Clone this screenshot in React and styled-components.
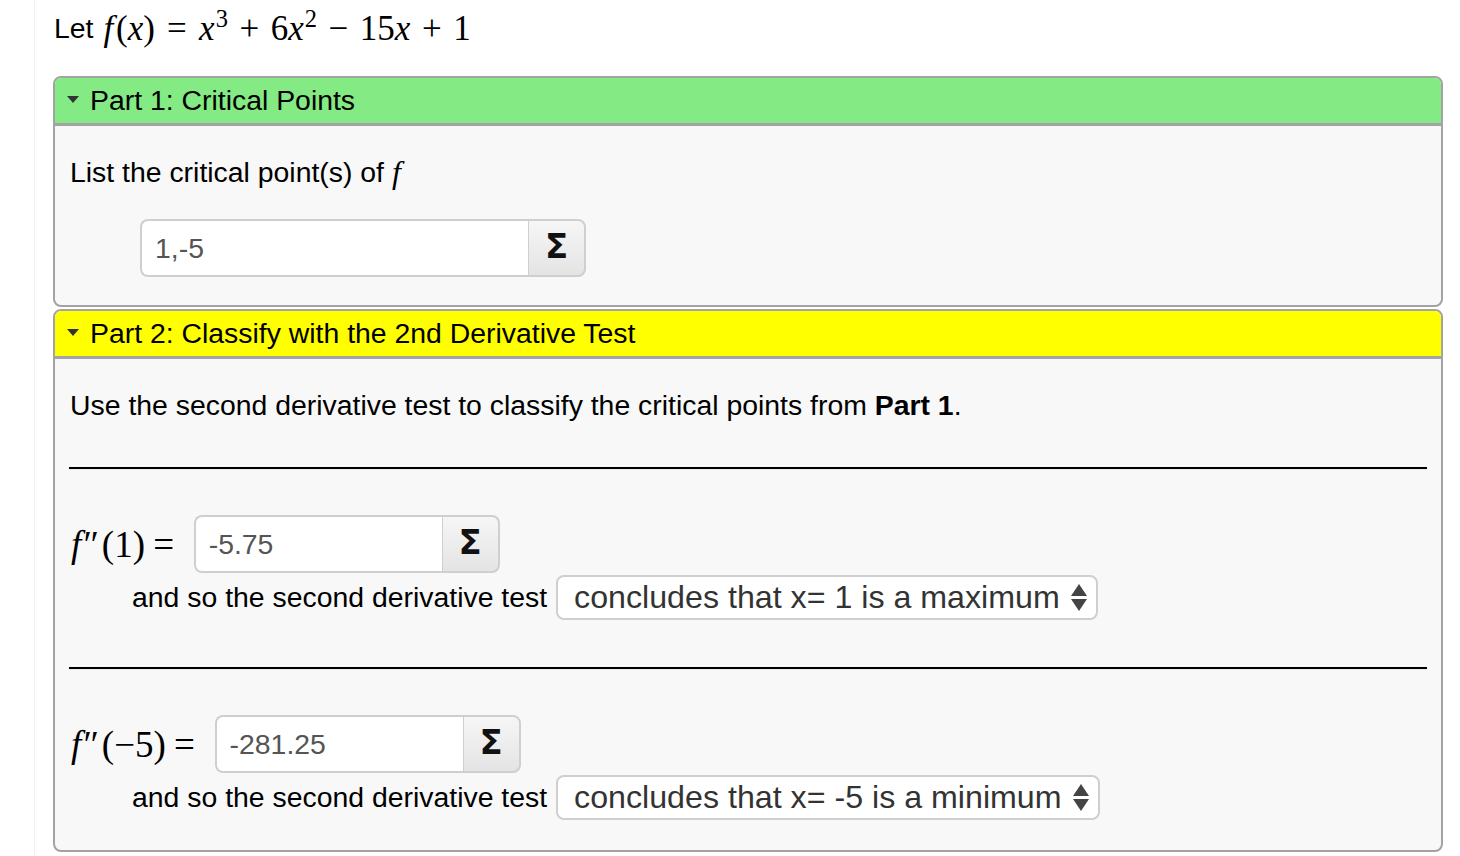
import React from "react";
import styled, { createGlobalStyle } from "styled-components";

const Global = createGlobalStyle`
  html, body { margin: 0; padding: 0; background: #fff; }
  body { font-family: "Liberation Sans", Arial, sans-serif; color: #000; }
`;

const Page = styled.div`
  margin-left: 34px;
  border-left: 1px solid #f1f1f1;
  padding: 8px 17px 0 18px;
  min-height: 848px;
`;

const Intro = styled.div`
  font-size: 28.4px;
  height: 40px;
  margin-left: 1px;
  display: flex;
  align-items: center;
  gap: 10px;
  white-space: nowrap;
`;

const Math = styled.span`
  font-family: "Liberation Serif", "Times New Roman", serif;
  font-size: ${(p) => p.size}px;
  white-space: nowrap;
  line-height: 1;
`;

const I = styled.i`
  font-style: italic;
  margin-right: ${(p) => p.mr || 0}em;
`;

const Op = styled.span`
  margin: 0 ${(p) => p.sp}em 0 ${(p) => p.spl ?? p.sp}em;
`;

const Sup = styled.sup`
  font-size: 0.7em;
  vertical-align: 0.5em;
  line-height: 0;
  margin-left: 0.04em;
`;

const Panel = styled.section`
  border: 2px solid #a3a3a3;
  border-radius: 8px;
  overflow: hidden;
  margin-top: ${(p) => p.gap}px;
  background: #f8f8f8;
`;

const Header = styled.div`
  background: ${(p) => p.bg};
  height: ${(p) => p.h}px;
  border-bottom: 3px solid #a3a3a3;
  display: flex;
  align-items: center;
  padding-left: 12px;
  gap: 11px;
  font-size: 28.4px;
`;

const Caret = styled.span`
  width: 0;
  height: 0;
  border-left: 6px solid transparent;
  border-right: 6px solid transparent;
  border-top: 7px solid #333;
  margin-top: -3px;
`;

const Body = styled.div`
  padding: 26px 15px ${(p) => p.pb}px 15px;
`;

const Text = styled.div`
  font-size: 28.4px;
  line-height: 40px;
  display: flex;
  align-items: center;
  gap: 8px;
  white-space: nowrap;
`;

const MathInline = styled.span`
  font-family: "Liberation Serif", "Times New Roman", serif;
  font-size: 32px;
  font-style: italic;
`;

const InputGroup = styled.div`
  display: flex;
  height: 58px;
  margin-left: ${(p) => p.indent || 0}px;
  margin-top: ${(p) => p.mt || 0}px;
`;

const Field = styled.div`
  width: ${(p) => p.w}px;
  box-sizing: border-box;
  background: #fff;
  border: 2px solid #cfcfcf;
  border-right: none;
  border-radius: 8px 0 0 8px;
  display: flex;
  align-items: center;
  padding-left: 13px;
  font-size: 28.4px;
  color: #555;
`;

const SigmaBtn = styled.div`
  width: 58px;
  box-sizing: border-box;
  border: 2px solid #cfcfcf;
  border-left: 1px solid #cfcfcf;
  border-radius: 0 8px 8px 0;
  background: linear-gradient(#f6f6f6, #e4e4e4);
  display: flex;
  align-items: center;
  justify-content: center;
  font-family: "DejaVu Sans", sans-serif;
  font-weight: bold;
  font-size: 34px;
  color: #111;
  padding-bottom: 5px;
`;

const Rule = styled.div`
  margin: ${(p) => p.mt}px -1px 0 -1px;
  border-top: 2px solid #000;
  border-bottom: 1px solid #eaeaea;
`;

const Row = styled.div`
  display: flex;
  align-items: center;
  gap: 16px;
  margin-top: 45px;
  margin-left: 1px;
  height: 58px;
`;

const TestRow = styled.div`
  display: flex;
  align-items: center;
  gap: 9px;
  margin-left: 62px;
  margin-top: 2px;
  font-size: 28.4px;
  white-space: nowrap;
`;

const Select = styled.div`
  height: 45px;
  box-sizing: border-box;
  border: 2px solid #cfcfcf;
  border-radius: 8px;
  background: #fff;
  display: flex;
  align-items: center;
  padding: 0 9px 0 16px;
  gap: 11px;
  font-size: 32.2px;
  color: #333;
  white-space: nowrap;
`;

const Arrows = styled.span`
  display: flex;
  flex-direction: column;
  gap: 3px;
  &::before, &::after {
    content: "";
    width: 0;
    height: 0;
    border-left: 8px solid transparent;
    border-right: 8px solid transparent;
  }
  &::before { border-bottom: 12px solid #444; }
  &::after { border-top: 12px solid #444; }
`;

const Deriv = ({ arg }) => (
  <Math size={37}>
    <I mr={0.06}>f</I>″<Op sp={0.04} />({arg})<Op spl={0.22} sp={0.1}>=</Op>
  </Math>
);

const Classify = ({ arg, value, conclusion, w }) => (
  <>
    <Row>
      <Deriv arg={arg} />
      <InputGroup>
        <Field w={w}>{value}</Field>
        <SigmaBtn>Σ</SigmaBtn>
      </InputGroup>
    </Row>
    <TestRow>
      <span>and so the second derivative test</span>
      <Select>
        {conclusion}
        <Arrows />
      </Select>
    </TestRow>
  </>
);

export default function App() {
  return (
    <>
      <Global />
      <Page>
        <Intro>
          <span>Let</span>
          <Math size={35}>
            <I mr={0.08}>f</I>(<I>x</I>)<Op sp={0.35}>=</Op>
            <I>x</I>
            <Sup>3</Sup>
            <Op sp={0.33}>+</Op>6<I>x</I>
            <Sup>2</Sup>
            <Op sp={0.33}>−</Op>15<I>x</I>
            <Op sp={0.33}>+</Op>1
          </Math>
        </Intro>
        <Panel gap={28}>
          <Header bg="#84ea84" h={45}>
            <Caret />
            Part 1: Critical Points
          </Header>
          <Body pb={28}>
            <Text>
              List the critical point(s) of <MathInline>f</MathInline>
            </Text>
            <InputGroup indent={70} mt={27}>
              <Field w={388}>1,-5</Field>
              <SigmaBtn>Σ</SigmaBtn>
            </InputGroup>
          </Body>
        </Panel>
        <Panel gap={2}>
          <Header bg="#ffff00" h={45}>
            <Caret />
            Part 2: Classify with the 2nd Derivative Test
          </Header>
          <Body pb={30}>
            <Text>
              <span>
                Use the second derivative test to classify the critical points from <b>Part 1</b>.
              </span>
            </Text>
            <Rule mt={42} />
            <Classify
              arg="1"
              value="-5.75"
              w={248}
              conclusion="concludes that x= 1 is a maximum"
            />
            <Rule mt={47} />
            <Classify
              arg="−5"
              value="-281.25"
              w={248}
              conclusion="concludes that x= -5 is a minimum"
            />
          </Body>
        </Panel>
      </Page>
    </>
  );
}
